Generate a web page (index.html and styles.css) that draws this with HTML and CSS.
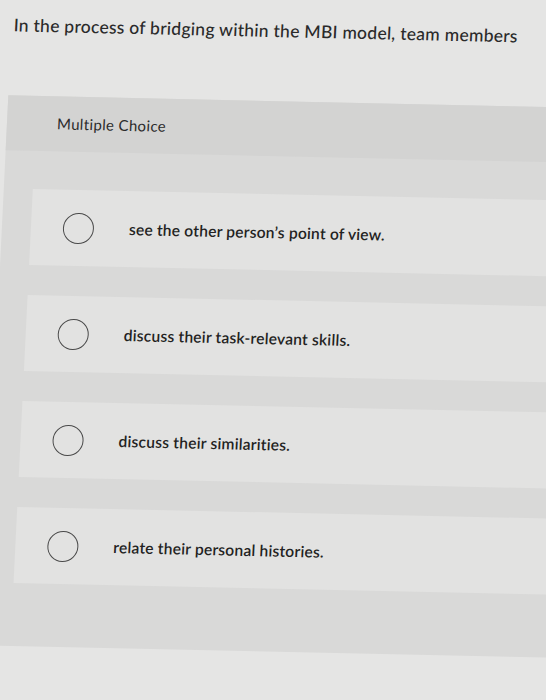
FILE: index.html
```html
<!DOCTYPE html>
<html lang="en">
<head>
<meta charset="utf-8">
<title>Multiple Choice</title>
<link rel="stylesheet" href="styles.css">
</head>
<body>
<main class="frame">
  <div class="sheet">
    <p class="question">In the process of bridging within the MBI model, team members</p>
    <section class="panel">
      <header class="panel-head">Multiple Choice</header>
      <ul class="options">
        <li class="option"><span class="radio"></span><span class="label">see the other person’s point of view.</span></li>
        <li class="option"><span class="radio"></span><span class="label">discuss their task-relevant skills.</span></li>
        <li class="option"><span class="radio"></span><span class="label">discuss their similarities.</span></li>
        <li class="option"><span class="radio"></span><span class="label">relate their personal histories.</span></li>
      </ul>
    </section>
  </div>
</main>
</body>
</html>
```

FILE: styles.css
```css
html, body {
  margin: 0;
  padding: 0;
  background: #e5e5e4;
}

.frame {
  width: 546px;
  height: 700px;
  overflow: hidden;
}

.sheet {
  transform-origin: 0 0;
  transform: skew(-2.8deg, 1.25deg);
  width: 580px;
  font-family: Lato, "Liberation Sans", sans-serif;
  color: #262626;
}

.question {
  margin: 0;
  padding: 14px 0 0 15px;
  font-size: 17.5px;
  line-height: 22px;
  font-weight: 500;
  letter-spacing: 0.25px;
  color: #2a2a2a;
}

.panel {
  margin: 59px 0 0 13px;
  background: #d9d9d8;
  padding-bottom: 63px;
}

.panel-head {
  height: 55px;
  background: #d3d3d2;
  display: flex;
  align-items: center;
  padding-left: 50px;
  padding-bottom: 2px;
  box-sizing: border-box;
  font-size: 15px;
  letter-spacing: 0.35px;
  color: #2b2b2b;
}

.options {
  list-style: none;
  margin: 38px 0 0 29px;
  padding: 0;
  display: flex;
  flex-direction: column;
  gap: 30px;
}

.option {
  height: 76px;
  background: #e2e2e1;
  display: flex;
  align-items: center;
  padding-left: 32px;
}

.radio {
  width: 29px;
  height: 29px;
  border: 1.6px solid #4a4a4a;
  border-radius: 50%;
  flex: none;
}

.label {
  margin-left: 35px;
  font-size: 15.6px;
  font-weight: 600;
  letter-spacing: 0.2px;
  color: #222;
}
```
